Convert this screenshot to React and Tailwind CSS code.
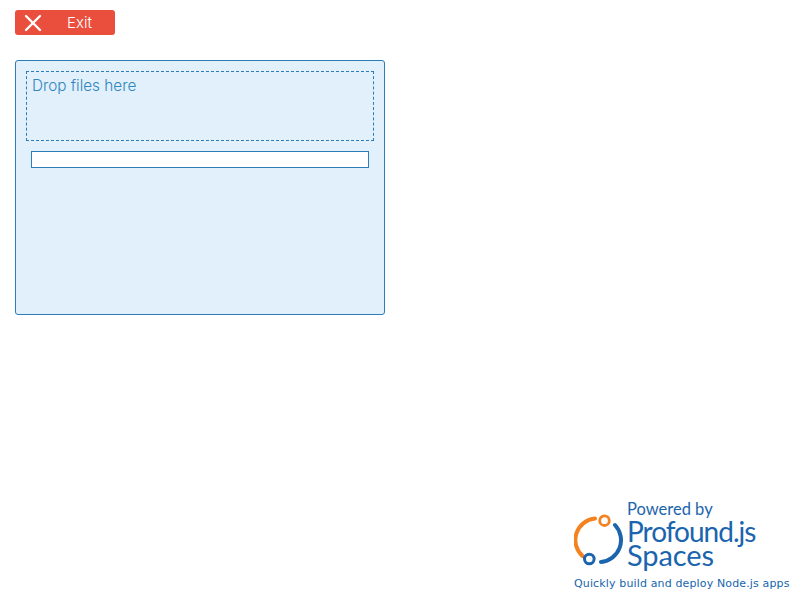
import React from 'react';
import { X } from 'lucide-react';

const LogoMark = () => (
  <svg width="49" height="54" viewBox="0 0 49 54" fill="none" className="shrink-0">
    <path d="M21 4.6 A21.5 21.5 0 0 0 8.5 42" stroke="#f58220" strokeWidth="4" strokeLinecap="round" />
    <circle cx="30.5" cy="6.7" r="4.8" stroke="#f58220" strokeWidth="2.8" />
    <path d="M41 11 A22 22 0 0 1 27 48" stroke="#1b64ae" strokeWidth="4" strokeLinecap="round" />
    <circle cx="15.3" cy="45" r="4.8" stroke="#1b64ae" strokeWidth="3" />
  </svg>
);

const App = () => {
  return (
    <div className="w-[800px] h-[600px] bg-white flex flex-col justify-between overflow-hidden font-['Inter',sans-serif]">
      <div className="pt-[10px] pl-[15px]">
        <button className="w-[100px] h-[25px] flex items-center bg-[#ea4e3d] rounded-[3px] text-white text-[15px] font-light">
          <X size={28} strokeWidth={2} className="ml-[4px]" />
          <span className="ml-[20px] pt-[2px]">Exit</span>
        </button>

        <div className="mt-[25px] w-[370px] h-[255px] bg-[#e1f0fb] border border-[#2b7cb8] rounded-[3px] pt-[10px] px-[10px]">
          <div className="h-[70px] border border-dashed border-[#2b7cb8] px-[5px] pt-[4px] text-[15.3px] leading-[20px] font-light text-[#2f86c0]">
            Drop files here
          </div>
          <div className="mt-[10px] mx-[5px] h-[17px] bg-white border border-[#2b7cb8]" />
        </div>
      </div>

      <div className="self-end w-[216px] mr-[10px] mb-[9px] flex flex-col">
        <div className="flex items-start">
          <div className="pt-[16px]">
            <LogoMark />
          </div>
          <div className="ml-[4px] pt-[1px] flex flex-col text-[#1b64ae] font-['Lato',sans-serif]">
            <span className="text-[16.5px] leading-[20px]">Powered by</span>
            <span className="text-[28px] leading-[25px] tracking-[-1px]">Profound.js</span>
            <span className="text-[29px] leading-[22px] tracking-[-0.1px]">Spaces</span>
          </div>
        </div>
        <span className="mt-[9px] text-[11px] leading-[14px] tracking-[0.14px] text-[#1565ae] whitespace-nowrap font-['DejaVu_Sans',sans-serif]">
          Quickly build and deploy Node.js apps
        </span>
      </div>
    </div>
  );
};

export default App;
